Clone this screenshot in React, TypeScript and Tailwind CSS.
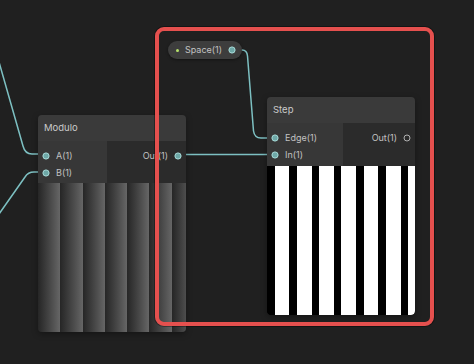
import React from "react";

const MOD_STRIPES = [0, 1, 2, 3, 4, 5, 6];
const STEP_STRIPES = [0, 1, 2, 3, 4, 5, 6];

function Port({ linked = true }: { linked?: boolean }) {
  return (
    <svg width="8" height="8" viewBox="0 0 8 8" className="shrink-0">
      {linked ? (
        <circle cx="4" cy="4" r="3.1" fill="#6ea8a7" stroke="#a8dbd9" strokeWidth="1" />
      ) : (
        <circle cx="4" cy="4" r="3" fill="#2b2b2b" stroke="#b0b0b0" strokeWidth="1" />
      )}
    </svg>
  );
}

function InRow({ label }: { label: string }) {
  return (
    <div className="h-[17px] flex items-center gap-[6px] pl-[4px]">
      <Port />
      <span>{label}</span>
    </div>
  );
}

function OutRow({ label, linked }: { label: string; linked?: boolean }) {
  return (
    <div className="h-[17px] flex items-center justify-end gap-[6px] pr-[4px]">
      <span>{label}</span>
      <Port linked={linked} />
    </div>
  );
}

export default function App() {
  return (
    <div
      className="relative w-[474px] h-[364px] bg-[#202020] overflow-hidden text-[9px] text-[#c2c2c2]"
      style={{ fontFamily: "Inter, 'Noto Sans', sans-serif" }}
    >
      {/* Wires */}
      <svg className="absolute inset-0" width="474" height="364" fill="none">
        <g stroke="#7dc0c2" strokeWidth="1.5" strokeLinecap="round">
          <path d="M-1,62 L23,146 Q25,154 32,154 L44,154" />
          <path d="M-1,214 L25,177 Q28,172 34,172 L44,172" />
          <path d="M229,50 L242,50 Q247,50 247.5,56 L253.5,131 Q254.5,138 261,138 L274,138" />
          <path d="M180,154.5 L274,154.5" />
        </g>
      </svg>

      {/* Modulo node */}
      <div className="absolute left-[38px] top-[115px] w-[148px] rounded-[4px] overflow-hidden shadow-[0_2px_6px_rgba(0,0,0,0.35)]">
        <div className="h-[26px] bg-[#3a3a3a] flex items-center px-[6px] text-[9.5px] text-[#cacaca]">
          Modulo
        </div>
        <div className="flex h-[42px]">
          <div className="w-[69px] bg-[#373737] pt-[6px]">
            <InRow label="A(1)" />
            <InRow label="B(1)" />
          </div>
          <div className="flex-1 bg-[#2b2b2b] pt-[6px]">
            <OutRow label="Out(1)" />
          </div>
        </div>
        <div className="h-[149px] flex overflow-hidden bg-[#222]">
          {MOD_STRIPES.map((i) => (
            <div
              key={i}
              className="w-[22.3px] shrink-0 bg-gradient-to-r from-[#262626] to-[#666666]"
            />
          ))}
        </div>
      </div>

      {/* Step node */}
      <div className="absolute left-[267px] top-[97px] w-[148px] rounded-[4px] overflow-hidden shadow-[0_2px_6px_rgba(0,0,0,0.35)]">
        <div className="h-[26px] bg-[#3a3a3a] flex items-center px-[6px] text-[9.5px] text-[#cacaca]">
          Step
        </div>
        <div className="flex h-[43px]">
          <div className="w-[76px] bg-[#373737] pt-[6px]">
            <InRow label="Edge(1)" />
            <InRow label="In(1)" />
          </div>
          <div className="flex-1 bg-[#2b2b2b] pt-[6px]">
            <OutRow label="Out(1)" linked={false} />
          </div>
        </div>
        <div className="h-[149px] flex overflow-hidden bg-black rounded-b-[4px]">
          {STEP_STRIPES.map((i) => (
            <div key={i} className="w-[22.3px] shrink-0 flex">
              <div className="w-[7.5px] bg-black" />
              <div className="flex-1 bg-white" />
            </div>
          ))}
        </div>
      </div>

      {/* Space property pill */}
      <div className="absolute left-[168px] top-[41px] w-[74px] h-[18px] rounded-full bg-[#3d3d3d] flex items-center pl-[8px] shadow-[0_1px_3px_rgba(0,0,0,0.4)]">
        <span className="w-[3px] h-[3px] rounded-full bg-[#b6e36b]" />
        <span className="ml-[6px]">Space(1)</span>
        <span className="ml-[6px] flex">
          <Port />
        </span>
      </div>

      {/* Highlight frame */}
      <div className="absolute left-[155px] top-[27px] w-[279px] h-[299px] rounded-[9px] border-4 border-[#e5504e] shadow-[0_0_0_1px_rgba(0,0,0,0.35)]" />
    </div>
  );
}
